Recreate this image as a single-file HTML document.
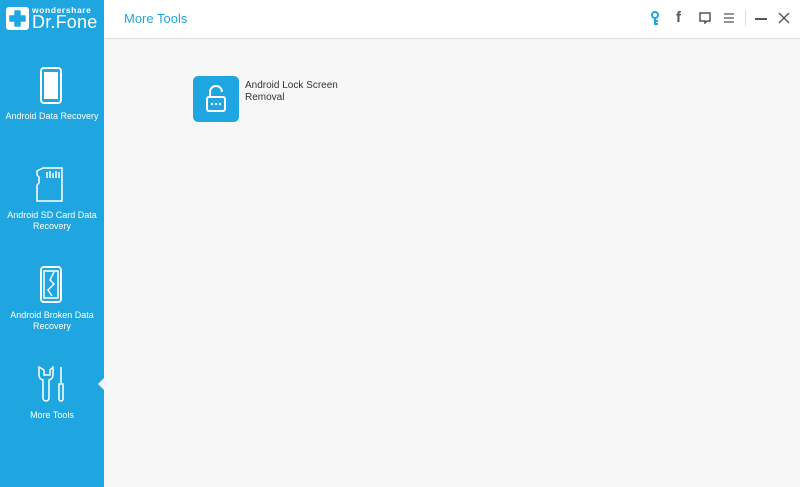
<!DOCTYPE html>
<html><head><meta charset="utf-8"><style>
*{margin:0;padding:0;box-sizing:border-box}
body{width:800px;height:487px;overflow:hidden;font-family:"Liberation Sans",sans-serif;background:#f7f7f7;position:relative}
.side{position:absolute;left:0;top:0;width:104px;height:487px;background:#1fa6e0}
.top{position:absolute;left:104px;top:0;right:0;height:39px;background:#fff;border-bottom:1.5px solid #dcdcdc}
.title{position:absolute;left:20px;top:11px;font-size:13px;color:#1fa6e0}
.item{position:absolute;left:0;width:104px;text-align:center;color:#fff;font-size:9px;line-height:11px}
.ico{position:absolute}
</style></head><body>
<div class="side">
  <svg class="ico" style="left:6px;top:7px" width="23" height="23" viewBox="0 0 23 23"><rect x="0" y="0" width="23" height="23" rx="3" fill="#fff"/><path d="M9 4h5v5h5v5h-5v5h-5v-5h-5v-5h5z" fill="#1fa6e0" stroke="#1fa6e0" stroke-width="1.5" stroke-linejoin="round"/></svg>
  <div style="position:absolute;left:32px;top:5px;color:#fff;font-size:8.5px;letter-spacing:0.6px;font-weight:bold">wondershare</div>
  <div style="position:absolute;left:32px;top:13px;color:#fff;font-size:18px;line-height:18px;letter-spacing:0.2px">Dr.Fone</div>
  <svg class="ico" style="left:40px;top:67px" width="22" height="37" viewBox="0 0 22 37"><rect x="1" y="1" width="20" height="35" rx="3" fill="none" stroke="#fff" stroke-width="2"/><rect x="4" y="5" width="14" height="27" fill="#fff"/><circle cx="11" cy="3" r="0.8" fill="#1fa6e0"/></svg>
  <div class="item" style="top:111px">Android Data Recovery</div>
  <svg class="ico" style="left:36px;top:167px" width="28" height="35" viewBox="0 0 28 35"><path d="M7 1h19v33h-25v-16l2-2v-6l-2-2v-4z" fill="none" stroke="#fff" stroke-width="1.5"/><path d="M11 5v6M14 4v7M17 6v5M20 4v7M23 5v6" stroke="#fff" stroke-width="1.5"/></svg>
  <div class="item" style="top:210px">Android SD Card Data<br>Recovery</div>
  <svg class="ico" style="left:40px;top:266px" width="22" height="37" viewBox="0 0 22 37"><rect x="1" y="1" width="20" height="35" rx="3" fill="none" stroke="#fff" stroke-width="2"/><rect x="4" y="5" width="14" height="27" fill="none" stroke="#fff" stroke-width="1.5"/><path d="M14 6l-4 8 4 4-6 6 4 6" fill="none" stroke="#fff" stroke-width="1.5"/></svg>
  <div class="item" style="top:310px">Android Broken Data<br>Recovery</div>
  <svg class="ico" style="left:35px;top:366px" width="32" height="36" viewBox="0 0 32 36"><path d="M4 1v8a5 5 0 0 0 4 5v18a3 3 0 0 0 6 0v-18a5 5 0 0 0 4-5v-8l-3 3v5h-6v-5z" fill="none" stroke="#fff" stroke-width="1.5"/><path d="M26 1v16M24 18h4v15a2 2 0 0 1-4 0z" fill="none" stroke="#fff" stroke-width="1.5"/></svg>
  <div class="item" style="top:410px">More Tools</div>
  <div style="position:absolute;left:98px;top:377px;width:0;height:0;border-top:7px solid transparent;border-bottom:7px solid transparent;border-right:7px solid #f7f7f7"></div>
</div>
<div class="top"><div class="title">More Tools</div>
  <svg class="ico" style="left:546px;top:11px" width="10" height="15" viewBox="0 0 10 15"><circle cx="5" cy="4" r="3" fill="none" stroke="#1fa6e0" stroke-width="2"/><path d="M5 7v7M5 10h3M5 13h3" stroke="#1fa6e0" stroke-width="2"/></svg>
  <div style="position:absolute;left:572px;top:9px;font-size:15px;font-weight:bold;color:#555">f</div>
  <svg class="ico" style="left:595px;top:12px" width="12" height="12" viewBox="0 0 12 12"><path d="M1 1h10v8h-3l-2 2v-2h-5z" fill="none" stroke="#555" stroke-width="1.5"/></svg>
  <svg class="ico" style="left:619px;top:12px" width="12" height="12" viewBox="0 0 12 12"><path d="M1 2h10M1 6h10M1 10h10" stroke="#555" stroke-width="1.3"/></svg>
  <div style="position:absolute;left:641px;top:10px;width:1px;height:16px;background:#ddd"></div>
  <div style="position:absolute;left:651px;top:18px;width:12px;height:1.5px;background:#555"></div>
  <svg class="ico" style="left:674px;top:12px" width="12" height="12" viewBox="0 0 12 12"><path d="M1 1l10 10M11 1l-10 10" stroke="#555" stroke-width="1.4"/></svg>
</div>
<svg class="ico" style="left:193px;top:76px" width="46" height="46" viewBox="0 0 46 46"><rect width="46" height="46" rx="5" fill="#1fa6e0"/><path d="M17 21v-5a6 6 0 0 1 12 0" fill="none" stroke="#fff" stroke-width="2"/><rect x="14" y="21" width="18" height="14" rx="2" fill="none" stroke="#fff" stroke-width="2"/><circle cx="19" cy="28" r="1.2" fill="#fff"/><circle cx="23" cy="28" r="1.2" fill="#fff"/><circle cx="27" cy="28" r="1.2" fill="#fff"/></svg>
<div style="position:absolute;left:245px;top:80px;font-size:10px;line-height:12px;color:#333">Android Lock Screen<br>Removal</div>
</body></html>
